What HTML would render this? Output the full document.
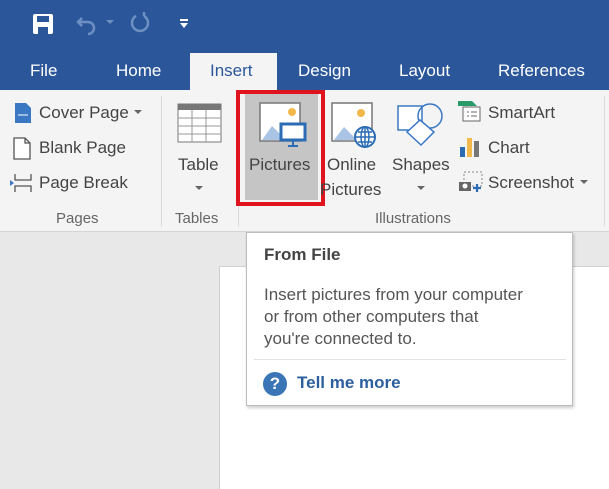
<!DOCTYPE html>
<html><head><style>
*{margin:0;padding:0;box-sizing:border-box}
body{width:609px;height:489px;overflow:hidden;position:relative;font-family:"Liberation Sans",sans-serif;background:#e8e8e8}
.a{position:absolute;white-space:nowrap}
.blue{background:#2b579a;left:0;top:0;width:609px;height:90px}
.tab{color:#fff;font-size:17px;top:61px}
.rib{background:#f4f4f4;left:0;top:90px;width:609px;height:142px;border-bottom:1px solid #d5d5d5}
.t{font-size:17px;color:#444}
.g{font-size:15px;color:#666}
</style></head><body>
<div class="a blue"></div>
<svg class="a" style="left:31px;top:12px" width="24" height="24" viewBox="0 0 24 24"><rect x="2" y="2" width="20" height="20" rx="2" fill="#fff"/><rect x="6" y="4" width="12" height="6" fill="#2b579a"/><rect x="7" y="15" width="10" height="7" fill="#2b579a"/></svg>
<svg class="a" style="left:76px;top:12px" width="50" height="24" viewBox="0 0 50 24"><path d="M6 6 L2 10 L6 14 M2 10 H12 A6 6 0 0 1 12 22" stroke="#6e8fc2" stroke-width="2.5" fill="none"/><path d="M30 8 l4 4 l4 -4z" fill="#6e8fc2"/></svg>
<svg class="a" style="left:128px;top:11px" width="24" height="26" viewBox="0 0 24 26"><path d="M8 5 A8 8 0 1 0 16 5 M16 5 V1" stroke="#6e8fc2" stroke-width="2.5" fill="none"/></svg>
<div class="a" style="left:180px;top:19px;width:8px;height:2px;background:#fff"></div>
<svg class="a" style="left:180px;top:23px" width="8" height="6"><path d="M0 0h8l-4 5z" fill="#fff"/></svg>
<div class="a" style="left:190px;top:53px;width:87px;height:38px;background:#f4f4f4"></div>
<div class="a tab" style="left:30px">File</div>
<div class="a tab" style="left:116px">Home</div>
<div class="a tab" style="left:210px;color:#2b579a">Insert</div>
<div class="a tab" style="left:298px">Design</div>
<div class="a tab" style="left:399px">Layout</div>
<div class="a tab" style="left:498px">References</div>
<div class="a rib"></div>
<svg class="a" style="left:13px;top:102px" width="20" height="22"><path d="M2 1h11l5 5v15H2z" fill="#3b78c3"/><path d="M5 13h10" stroke="#fff"/></svg>
<div class="a t" style="left:39px;top:103px">Cover Page</div>
<svg class="a" style="left:134px;top:110px" width="8" height="5"><path d="M0 0h8l-4 4z" fill="#666"/></svg>
<svg class="a" style="left:12px;top:137px" width="20" height="24"><path d="M2 1h11l5 5v16H2z M13 1v5h5" stroke="#555" stroke-width="1.3" fill="#fff"/></svg>
<div class="a t" style="left:39px;top:138px">Blank Page</div>
<svg class="a" style="left:9px;top:172px" width="26" height="22"><path d="M6 2v6h16V2 M6 20v-6h16v6" stroke="#555" stroke-width="1.3" fill="none"/><path d="M1 8l4 3-4 3z" fill="#3b78c3"/></svg>
<div class="a t" style="left:39px;top:173px">Page Break</div>
<div class="a g" style="left:56px;top:210px">Pages</div>
<div class="a" style="left:161px;top:96px;width:1px;height:130px;background:#dadada"></div>
<svg class="a" style="left:177px;top:103px" width="45" height="40"><rect x="1" y="1" width="43" height="38" fill="#fff" stroke="#777"/><rect x="1" y="1" width="43" height="6" fill="#777"/><path d="M1 15h43M1 23h43M1 31h43M15 7v32M29 7v32" stroke="#999"/></svg>
<div class="a t" style="left:178px;top:155px">Table</div>
<svg class="a" style="left:195px;top:186px" width="8" height="5"><path d="M0 0h8l-4 4z" fill="#666"/></svg>
<div class="a g" style="left:175px;top:210px">Tables</div>
<div class="a" style="left:238px;top:96px;width:1px;height:130px;background:#dadada"></div>
<div class="a" style="left:236px;top:90px;width:89px;height:116px;border:4px solid #e0141e"></div>
<div class="a" style="left:245px;top:94px;width:73px;height:106px;background:#c5c5c5"></div>
<svg class="a" style="left:258px;top:100px" width="50" height="50"><rect x="2" y="3" width="40" height="38" fill="#fff" stroke="#777" stroke-width="1.5"/><path d="M4 40 L14 26 L24 36 L30 30 L40 40z" fill="#a9c4e4"/><circle cx="34" cy="12" r="4" fill="#f1b84b"/><rect x="23" y="24" width="24" height="16" fill="#fff" stroke="#2b6cb5" stroke-width="3"/><path d="M35 40v5M30 46h10" stroke="#2b6cb5" stroke-width="2"/></svg>
<div class="a t" style="left:249px;top:155px">Pictures</div>
<svg class="a" style="left:330px;top:101px" width="50" height="50"><rect x="2" y="2" width="40" height="38" fill="#fff" stroke="#777" stroke-width="1.5"/><path d="M4 39 L14 26 L24 36 L30 30 L38 39z" fill="#a9c4e4"/><circle cx="31" cy="12" r="4" fill="#f1b84b"/><circle cx="35" cy="36" r="10" fill="#fff" stroke="#2b6cb5" stroke-width="2"/><path d="M25 36h20M35 26v20M28 31h14M28 41h14" stroke="#2b6cb5" stroke-width="1.5"/><ellipse cx="35" cy="36" rx="4" ry="10" fill="none" stroke="#2b6cb5" stroke-width="1.5"/></svg>
<div class="a t" style="left:327px;top:155px">Online</div>
<div class="a t" style="left:320px;top:180px">Pictures</div>
<svg class="a" style="left:396px;top:100px" width="52" height="48"><rect x="2" y="6" width="24" height="24" fill="#fff" stroke="#3b78c3" stroke-width="1.5"/><circle cx="34" cy="16" r="12" fill="none" stroke="#3b78c3" stroke-width="1.5"/><path d="M24 20 L38 32 L25 45 L11 32z" fill="#fff" stroke="#3b78c3" stroke-width="1.5"/></svg>
<div class="a t" style="left:392px;top:155px">Shapes</div>
<svg class="a" style="left:417px;top:186px" width="8" height="5"><path d="M0 0h8l-4 4z" fill="#666"/></svg>
<svg class="a" style="left:457px;top:99px" width="26" height="26"><path d="M1 2h14l5 5H1z" fill="#2a9a6a"/><rect x="6" y="8" width="17" height="14" fill="#fff" stroke="#666"/><path d="M10 13h2M14 13h6M10 17h2M14 17h6" stroke="#666"/></svg>
<div class="a t" style="left:488px;top:103px">SmartArt</div>
<svg class="a" style="left:459px;top:135px" width="24" height="24"><rect x="1" y="12" width="5" height="10" fill="#2b6cb5"/><rect x="8" y="3" width="5" height="19" fill="#f1b84b"/><rect x="15" y="6" width="5" height="16" fill="#777"/></svg>
<div class="a t" style="left:488px;top:138px">Chart</div>
<svg class="a" style="left:457px;top:170px" width="28" height="24"><rect x="7" y="2" width="18" height="14" fill="none" stroke="#888" stroke-dasharray="2 2"/><rect x="2" y="12" width="12" height="9" fill="#666"/><circle cx="8" cy="16" r="2.5" fill="#fff"/><path d="M20 14v8M16 18h8" stroke="#2b6cb5" stroke-width="2.2"/></svg>
<div class="a t" style="left:488px;top:173px">Screenshot</div>
<svg class="a" style="left:580px;top:180px" width="8" height="5"><path d="M0 0h8l-4 4z" fill="#666"/></svg>
<div class="a g" style="left:375px;top:210px">Illustrations</div>
<div class="a" style="left:604px;top:96px;width:1px;height:130px;background:#dadada"></div>
<div class="a" style="left:219px;top:266px;width:390px;height:223px;background:#fff;border-left:1px solid #d0d0d0;border-top:1px solid #d0d0d0"></div>
<div class="a" style="left:246px;top:232px;width:327px;height:174px;background:#fff;border:1px solid #bdbdbd;box-shadow:1px 2px 3px rgba(0,0,0,.2)"></div>
<div class="a" style="left:264px;top:245px;font-size:17px;font-weight:bold;color:#444">From File</div>
<div class="a" style="left:264px;top:284px;font-size:17px;color:#555;line-height:22px">Insert pictures from your computer<br>or from other computers that<br>you're connected to.</div>
<div class="a" style="left:254px;top:359px;width:312px;height:1px;background:#e2e2e2"></div>
<div class="a" style="left:263px;top:372px;width:24px;height:24px;border-radius:50%;background:#3a75b5;color:#fff;font-weight:bold;font-size:17px;text-align:center;line-height:24px">?</div>
<div class="a" style="left:297px;top:373px;font-size:17px;font-weight:bold;color:#2b5f9e">Tell me more</div>
</body></html>
